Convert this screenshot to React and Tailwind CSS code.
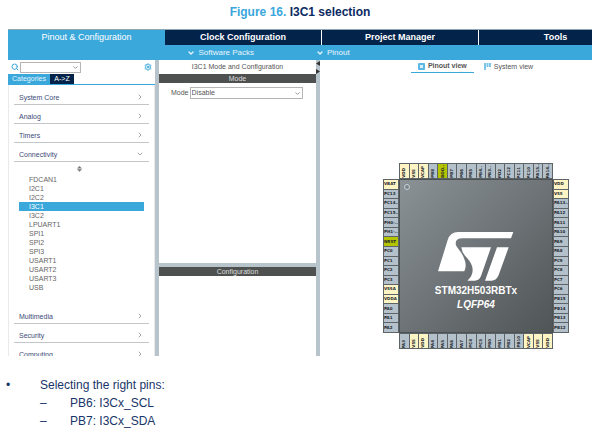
import React from "react";
import { ChevronDown, ChevronRight, Search, Settings } from "lucide-react";

const topPins = ["VDD", "VSS", "VCAP", "PB8", "BOO..", "PB7", "PB6", "PB5", "PB4..", "PB3..", "PD2", "PC12", "PC11", "PC10", "PA15..", "PA14.."];
const leftPins = ["VBAT", "PC13", "PC14..", "PC15..", "PH0-..", "PH1-..", "NRST", "PC0", "PC1", "PC2", "PC3", "VSSA", "VDDA", "PA0", "PA1", "PA2"];
const rightPins = ["VDD", "VSS", "PA13..", "PA12", "PA11", "PA10", "PA9", "PA8", "PC9", "PC8", "PC7", "PC6", "PB15", "PB14", "PB13", "PB12"];
const bottomPins = ["PA3", "VSS", "VDD", "PA4", "PA5", "PA6", "PA7", "PC4", "PC5", "PB0", "PB1", "PB2", "PB10", "VCAP", "VSS", "VDD"];
const peripherals = ["FDCAN1", "I2C1", "I2C2", "I3C1", "I3C2", "LPUART1", "SPI1", "SPI2", "SPI3", "USART1", "USART2", "USART3", "USB"];

function pinColor(name) {
  if (name === "NRST" || name === "BOO..") return "bg-[#b5c400]";
  if (name.startsWith("V")) return "bg-[#fff4c4]";
  return "bg-[#b4c1ca]";
}

function PinColumn({ pins }) {
  return (
    <div className="grid grid-rows-16 border-t border-[#5d6468]">
      {pins.map((p, i) => (
        <div key={i} className={`flex min-h-0 items-center overflow-hidden border-x border-b border-[#5d6468] leading-none ${pinColor(p)}`}>
          {p}
        </div>
      ))}
    </div>
  );
}

function PinRow({ pins }) {
  return (
    <div className="grid grid-cols-16 border-l border-[#5d6468]">
      {pins.map((p, i) => (
        <div key={i} className={`flex min-w-0 items-end justify-center overflow-hidden border-y border-r border-[#5d6468] leading-none ${pinColor(p)}`}>
          <span className="rotate-180 [writing-mode:vertical-rl]">{p}</span>
        </div>
      ))}
    </div>
  );
}

function Chip() {
  return (
    <div className="grid grid-cols-[16px_154px_16px] grid-rows-[16px_154px_16px] font-['DejaVu_Sans',sans-serif] text-[4px] font-bold text-[#22282c]">
      <div />
      <PinRow pins={topPins} />
      <div />
      <PinColumn pins={leftPins} />
      <div className="flex flex-col items-center border border-[#4c5254] bg-linear-to-br from-[#8b9296] via-[#6d7376] to-[#505557] font-['Liberation_Sans',Arial,sans-serif] text-[10px] leading-[12px] text-white">
        <div className="flex w-full px-1 pt-1">
          <span className="size-[6px] rounded-full border border-[#c9d3da] bg-[#78838b]" />
        </div>
        <svg className="mt-[42px] h-[49px] w-[76px]" viewBox="24 34 228 147" fill="white" aria-label="ST">
          <path d="M84 34H250L243 53H98Q77 53 77 68Q77 76 87 87Q100 103 105 121Q110 138 103 152H24L53 58Q61 34 84 34Z" />
          <path d="M94 80H183L153 166Q148 180 134 180H112Q128 166 128 148Q128 131 112 113Q95 96 94 80Z" />
          <path d="M201 80H236L206 163Q200 180 184 180H165Z" />
        </svg>
        <div className="mt-1">STM32H503RBTx</div>
        <div className="mt-[2px] italic">LQFP64</div>
      </div>
      <PinColumn pins={rightPins} />
      <div />
      <PinRow pins={bottomPins} />
      <div />
    </div>
  );
}

function Category({ name, open }) {
  const Icon = open ? ChevronDown : ChevronRight;
  return (
    <button type="button" aria-expanded={!!open} className="flex h-[19px] w-full shrink-0 items-end justify-between border-b border-[#c3c6c9] px-[5px] pb-[1px] text-left text-[7px] leading-[10px] text-[#3c4a78]">
      {name}
      <Icon className="mb-[2px] size-2 text-[#777]" strokeWidth={2} />
    </button>
  );
}

export default function App() {
  return (
    <main className="bg-white pb-4 font-['Liberation_Sans',Arial,sans-serif] text-[#555]">
      <h1 className="h-[29px] pt-[5px] text-center text-[12px] leading-[14px] font-bold text-[#0b2a63]">
        <span className="text-[#3aa7dc]">Figure 16.</span> I3C1 selection
      </h1>

      <section className="mx-2">
        <nav className="grid h-4 grid-cols-[157fr_156fr_157fr_114fr] border-t border-[#8fa6b5] text-[9px] leading-[15px] text-white">
          <button type="button" className="bg-[#3ba8dc] font-medium">Pinout &amp; Configuration</button>
          <button type="button" className="bg-[#03234b] font-bold">Clock Configuration</button>
          <button type="button" className="border-l border-white bg-[#03234b] font-bold">Project Manager</button>
          <button type="button" className="border-l border-white bg-[#03234b] pl-10 font-bold">Tools</button>
        </nav>
        <div className="grid h-[15px] grid-cols-[308fr_276fr] bg-[#3ba8dc] text-[8px] text-[#e8f5fc]">
          <button type="button" className="flex items-center justify-end gap-[3px] pr-[62px]">
            <ChevronDown className="size-2" strokeWidth={4} />Software Packs
          </button>
          <button type="button" className="flex items-center gap-[3px]">
            <ChevronDown className="size-2" strokeWidth={4} />Pinout
          </button>
        </div>

        <div className="flex h-[296px] overflow-hidden">
          <aside className="flex w-[147px] shrink-0 flex-col overflow-hidden">
            <div className="flex h-[14px] shrink-0 items-center pl-[3px]">
              <Search className="size-2 text-[#3ba8dc]" strokeWidth={3} />
              <div className="relative ml-[1px] h-[11px] w-[61px]">
                <select aria-label="Search peripherals" className="block h-full w-full appearance-none border border-[#b5b5b5] bg-white text-[7px]">
                  <option></option>
                </select>
                <ChevronDown className="pointer-events-none absolute top-[2px] right-[2px] size-[7px]" />
              </div>
              <button type="button" aria-label="Settings" className="mr-[3px] ml-auto text-[#3ba8dc]">
                <Settings className="size-2" strokeWidth={3} />
              </button>
            </div>
            <div className="flex h-[11px] shrink-0 border-b border-[#3ba8dc] text-[7px] leading-[10px] text-white">
              <button type="button" className="w-[42px] bg-[#3ba8dc] text-[#e3f4fc]">Categories</button>
              <button type="button" className="w-6 bg-[#03234b]">A-&gt;Z</button>
            </div>
            <div className="flex flex-1 flex-col border-x border-[#e8eaec] px-[5px] pt-[1px]">
              <Category name="System Core" />
              <Category name="Analog" />
              <Category name="Timers" />
              <Category name="Connectivity" open />
              <div className="flex h-[13px] shrink-0 items-center justify-center pr-1">
                <svg className="h-[6px] w-[5px]" viewBox="0 0 5 6" fill="#777" aria-hidden="true">
                  <path d="M2.5 0L5 2.5H0ZM0 3.2H5L2.5 5.7Z" />
                </svg>
              </div>
              <ul className="mb-[13px] px-[5px] text-[7px] leading-[9px] text-[#666]">
                {peripherals.map((p) => (
                  <li key={p} className={p === "I3C1" ? "bg-[#3ba8dc] pl-[10px] text-white" : "pl-[10px]"}>{p}</li>
                ))}
              </ul>
              <Category name="Multimedia" />
              <Category name="Security" />
              <Category name="Computing" />
            </div>
          </aside>
          <div className="w-1 shrink-0 bg-[#b8c4cc]" />

          <section className="flex w-[157px] shrink-0 flex-col">
            <h2 className="h-[14px] text-center text-[7px] leading-[14px]">I3C1 Mode and Configuration</h2>
            <h3 className="h-[9px] bg-[#4f5150] text-center text-[7px] leading-[9px] text-[#ddd]">Mode</h3>
            <div className="flex h-[180px] items-start pt-[4px] pl-3">
              <label htmlFor="mode" className="mr-[1px] text-[7px] leading-[12px]">Mode</label>
              <div className="relative h-3 w-[113px]">
                <select id="mode" className="block h-full w-full appearance-none border border-[#b5b5b5] bg-white pl-[1px] text-[7px] leading-[10px]">
                  <option>Disable</option>
                </select>
                <ChevronDown className="pointer-events-none absolute top-[3px] right-[2px] size-[7px]" />
              </div>
            </div>
            <div className="h-1 bg-[#b8c4cc]" />
            <h3 className="h-[9px] bg-[#4f5150] text-center text-[7px] leading-[9px] text-[#ddd]">Configuration</h3>
          </section>
          <div className="flex w-1 shrink-0 flex-col items-center gap-[3px] bg-[#b8c4cc] pt-[1px]">
            <svg className="h-[5px] w-1" viewBox="0 0 4 5" fill="#333" aria-hidden="true"><path d="M4 0V5L0 2.5Z" /></svg>
            <svg className="h-[5px] w-1" viewBox="0 0 4 5" fill="#333" aria-hidden="true"><path d="M0 0V5L4 2.5Z" /></svg>
          </div>

          <section className="flex min-w-0 flex-1 flex-col items-center">
            <div className="flex h-[13px] w-full justify-center gap-[10px] pl-8 text-[7px] leading-[12px]">
              <button type="button" className="flex w-[63px] items-center justify-center gap-[3px] border-b border-[#3ba8dc] font-bold">
                <svg className="size-[7px]" viewBox="0 0 7 7" aria-hidden="true">
                  <rect width="7" height="7" rx="1" fill="#5bb8e4" /><rect x="2" y="2" width="3" height="3" fill="#d9f0fb" />
                </svg>
                Pinout view
              </button>
              <button type="button" className="flex items-center gap-[3px]">
                <svg className="size-[7px]" viewBox="0 0 7 7" fill="#7cc6ea" aria-hidden="true">
                  <path d="M0 0H2V7H0ZM2.5 0H4.5V4H2.5ZM5 0H7V4H5Z" />
                </svg>
                System view
              </button>
            </div>
            <div className="mt-[90px] flex w-full justify-center pl-10">
              <Chip />
            </div>
          </section>
        </div>
      </section>

      <ul className="mt-[20px] text-[12px] leading-[18px] text-[#183568]">
        <li className="flex"><span className="w-10 pl-[6px]">•</span>
          <div>
            Selecting the right pins:
            <ul>
              <li className="flex"><span className="w-[30px]">–</span>PB6: I3Cx_SCL</li>
              <li className="flex"><span className="w-[30px]">–</span>PB7: I3Cx_SDA</li>
            </ul>
          </div>
        </li>
      </ul>
    </main>
  );
}
